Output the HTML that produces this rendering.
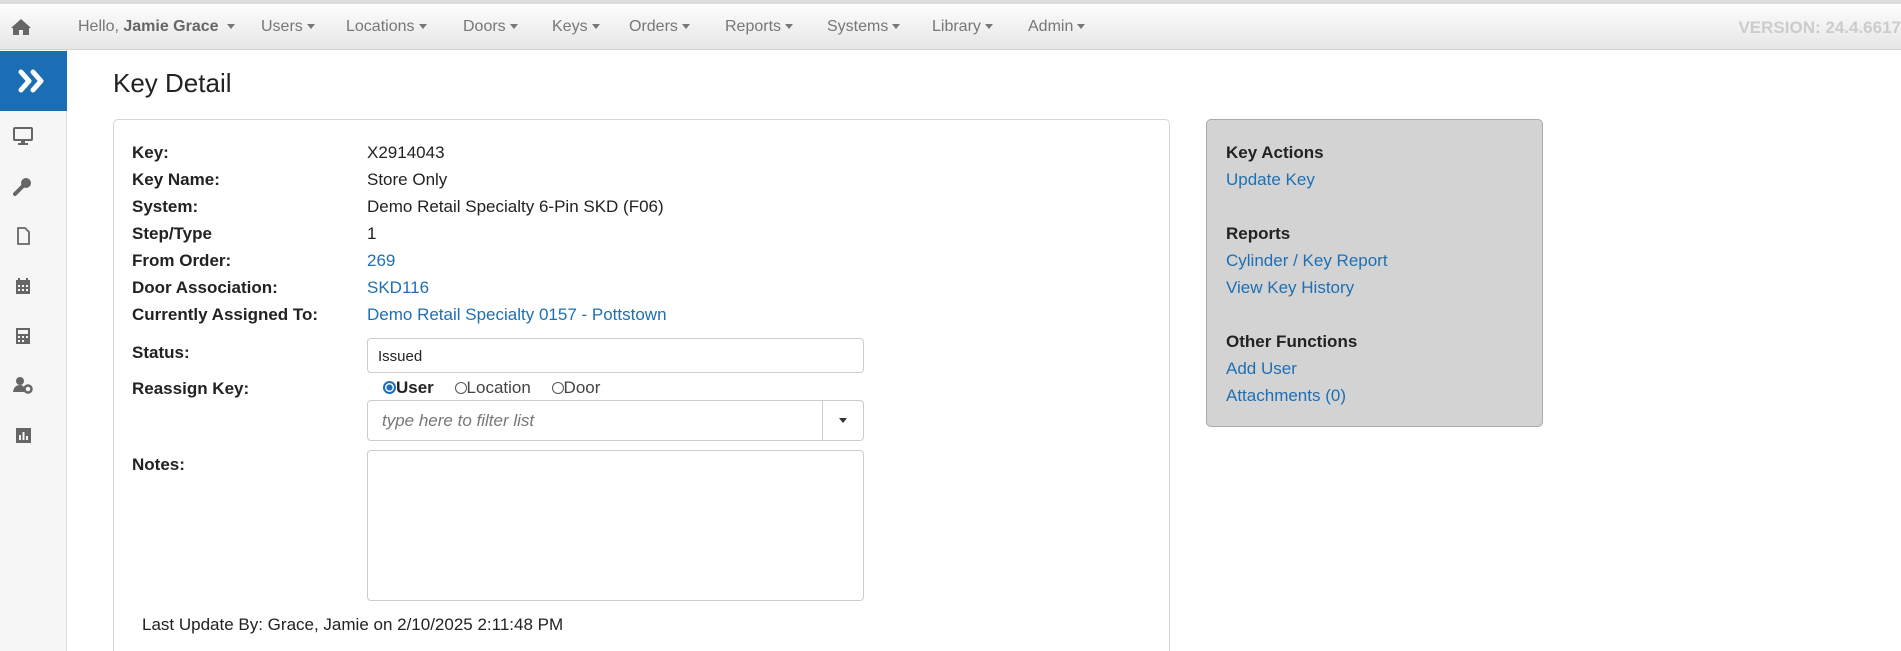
<!DOCTYPE html>
<html style="overflow:hidden;width:1901px;height:651px"><head><meta charset="utf-8"><style>
*{box-sizing:border-box;margin:0;padding:0}
body{width:1901px;height:651px;overflow:hidden;background:#fff;font-family:"Liberation Sans",sans-serif;color:#222;position:relative}
.topline{position:absolute;left:0;top:0;width:1901px;height:4px;background:#ddd}
.nav{position:absolute;left:0;top:4px;width:1901px;height:46px;background:linear-gradient(#fdfdfd,#e6e6e6);border-bottom:1px solid #d2d2d2}
.nav span{position:absolute;top:14px;font-size:16px;color:#777}
.car{display:inline-block;width:0;height:0;border-left:4px solid transparent;border-right:4px solid transparent;border-top:5px solid #777;vertical-align:middle;margin-left:4px}
.ver{position:absolute;right:0;top:14px;font-size:17px;font-weight:bold;color:#ccc}
.side{position:absolute;left:0;top:50px;width:67px;height:601px;background:#f6f6f6;border-right:1px solid #ddd}
.blue{position:absolute;left:0;top:51px;width:67px;height:60px;background:#1b6eb4}
.ico{position:absolute;left:13px;width:20px;height:20px}
h1{position:absolute;left:113px;top:68px;font-size:26px;font-weight:normal;color:#222}
.panel{position:absolute;left:113px;top:119px;width:1057px;height:540px;border:1px solid #d6d6d6;border-radius:5px}
.l{position:absolute;left:132px;font-size:17px;font-weight:bold}
.v{position:absolute;left:367px;font-size:17px}
a,.a{color:#1e6fb3;text-decoration:none}
.inp{position:absolute;left:367px;width:497px;border:1px solid #ccc;border-radius:4px;background:#fff}
.box{position:absolute;left:1206px;top:119px;width:337px;height:308px;background:#d3d3d3;border:1px solid #aaa;border-radius:5px}
.box div{position:absolute;left:19px;font-size:17px}
</style></head><body>
<div class="topline"></div>
<div class="nav">
<svg style="position:absolute;left:10px;top:14px" width="22" height="18" viewBox="0 0 22 18"><path d="M11 1 L1 10 L3 10 L3 17 L9 17 L9 12 L13 12 L13 17 L19 17 L19 10 L21 10 Z" fill="#666"/></svg>
<span style="left:78px">Hello, <b style="color:#666">Jamie Grace</b> <i class="car"></i></span>
<span style="left:261px">Users<i class="car"></i></span>
<span style="left:346px">Locations<i class="car"></i></span>
<span style="left:463px">Doors<i class="car"></i></span>
<span style="left:552px">Keys<i class="car"></i></span>
<span style="left:629px">Orders<i class="car"></i></span>
<span style="left:725px">Reports<i class="car"></i></span>
<span style="left:827px">Systems<i class="car"></i></span>
<span style="left:932px">Library<i class="car"></i></span>
<span style="left:1028px">Admin<i class="car"></i></span>
<div class="ver">VERSION: 24.4.6617</div>
</div>
<div class="side"></div>
<div class="blue"><svg style="position:absolute;left:18px;top:18px" width="30" height="24" viewBox="0 0 30 24"><path d="M3 3 L11 12 L3 21 M15 3 L23 12 L15 21" stroke="#fff" stroke-width="5" fill="none" stroke-linecap="round" stroke-linejoin="round"/></svg></div>
<svg class="ico" style="top:126px" viewBox="0 0 20 20"><rect x="1" y="2" width="18" height="12" rx="1" fill="none" stroke="#666" stroke-width="2"/><rect x="8" y="14" width="4" height="3" fill="#666"/><rect x="5" y="17" width="10" height="2" fill="#666"/></svg>
<svg class="ico" style="top:176px" viewBox="0 0 20 20"><circle cx="13" cy="7" r="5" fill="#666"/><path d="M10 10 L2 18" stroke="#666" stroke-width="4" stroke-linecap="round"/></svg>
<svg class="ico" style="top:226px" viewBox="0 0 20 20"><path d="M5 2 L12 2 L16 6 L16 18 L5 18 Z" fill="none" stroke="#666" stroke-width="1.8"/></svg>
<svg class="ico" style="top:276px" viewBox="0 0 20 20"><rect x="3" y="4" width="14" height="14" fill="#666"/><rect x="5" y="2" width="2" height="4" fill="#666"/><rect x="13" y="2" width="2" height="4" fill="#666"/><g fill="#f6f6f6"><rect x="5" y="9" width="2" height="2"/><rect x="9" y="9" width="2" height="2"/><rect x="13" y="9" width="2" height="2"/><rect x="5" y="13" width="2" height="2"/><rect x="9" y="13" width="2" height="2"/><rect x="13" y="13" width="2" height="2"/></g></svg>
<svg class="ico" style="top:326px" viewBox="0 0 20 20"><rect x="3" y="2" width="14" height="16" fill="#666"/><rect x="5" y="4" width="10" height="4" fill="#f6f6f6"/><g fill="#f6f6f6"><rect x="5" y="10" width="2" height="2"/><rect x="9" y="10" width="2" height="2"/><rect x="13" y="10" width="2" height="2"/><rect x="5" y="14" width="2" height="2"/><rect x="9" y="14" width="2" height="2"/></g></svg>
<svg class="ico" style="top:375px" viewBox="0 0 20 20"><circle cx="7" cy="6" r="4" fill="#666"/><path d="M0 17 Q1 10 7 10 Q12 10 12 17 Z" fill="#666"/><circle cx="15" cy="14" r="3.5" fill="none" stroke="#666" stroke-width="2.5"/></svg>
<svg class="ico" style="top:425px" viewBox="0 0 20 20"><rect x="3" y="3" width="15" height="15" fill="#666"/><g fill="#f6f6f6"><rect x="6" y="10" width="2" height="5"/><rect x="9.5" y="7" width="2" height="8"/><rect x="13" y="11" width="2" height="4"/></g></svg>
<h1>Key Detail</h1>
<div class="panel"></div>
<div class="l" style="top:143px">Key:</div><div class="v" style="top:143px">X2914043</div>
<div class="l" style="top:170px">Key Name:</div><div class="v" style="top:170px">Store Only</div>
<div class="l" style="top:197px">System:</div><div class="v" style="top:197px">Demo Retail Specialty 6-Pin SKD (F06)</div>
<div class="l" style="top:224px">Step/Type</div><div class="v" style="top:224px">1</div>
<div class="l" style="top:251px">From Order:</div><div class="v a" style="top:251px">269</div>
<div class="l" style="top:278px">Door Association:</div><div class="v a" style="top:278px">SKD116</div>
<div class="l" style="top:305px">Currently Assigned To:</div><div class="v a" style="top:305px">Demo Retail Specialty 0157 - Pottstown</div>
<div class="l" style="top:343px">Status:</div>
<div class="inp" style="top:338px;height:35px;font-size:15px;padding:9px 10px">Issued</div>
<div class="l" style="top:379px">Reassign Key:</div>
<div style="position:absolute;left:383px;top:378px;font-size:17px;color:#444">
<span style="display:inline-block;width:13px;height:13px;border-radius:50%;border:2px solid #1e6fb3;background:radial-gradient(#1e6fb3 45%,#fff 50%);vertical-align:-1px"></span><b style="color:#222">User</b>
<span style="display:inline-block;width:12px;height:12px;border-radius:50%;border:1px solid #555;margin-left:16px;vertical-align:-1px"></span>Location
<span style="display:inline-block;width:12px;height:12px;border-radius:50%;border:1px solid #555;margin-left:16px;vertical-align:-1px"></span>Door</div>
<div class="inp" style="top:400px;height:41px;font-size:17px;padding:10px 14px;color:#777;font-style:italic">type here to filter list
<div style="position:absolute;right:0;top:0;width:41px;height:39px;border-left:1px solid #ccc"><i class="car" style="position:absolute;left:16px;top:17px;border-top-color:#333;margin:0"></i></div></div>
<div class="l" style="top:455px">Notes:</div>
<div class="inp" style="top:450px;height:151px"></div>
<div style="position:absolute;left:142px;top:615px;font-size:17px">Last Update By: Grace, Jamie on 2/10/2025 2:11:48 PM</div>
<div class="box">
<div style="top:23px;font-weight:bold">Key Actions</div>
<div class="a" style="top:50px">Update Key</div>
<div style="top:104px;font-weight:bold">Reports</div>
<div class="a" style="top:131px">Cylinder / Key Report</div>
<div class="a" style="top:158px">View Key History</div>
<div style="top:212px;font-weight:bold">Other Functions</div>
<div class="a" style="top:239px">Add User</div>
<div class="a" style="top:266px">Attachments (0)</div>
</div>
</body></html>
